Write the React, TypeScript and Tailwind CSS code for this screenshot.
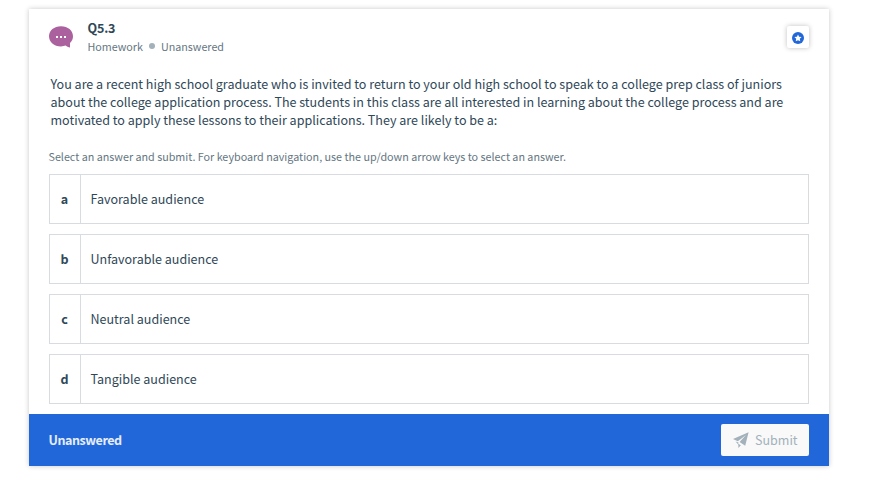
const answers = [
  { key: "a", text: "Favorable audience" },
  { key: "b", text: "Unfavorable audience" },
  { key: "c", text: "Neutral audience" },
  { key: "d", text: "Tangible audience" },
];

function ChatIcon() {
  return (
    <svg width="24" height="22" viewBox="0 0 24 22" aria-hidden="true">
      <path
        d="M12 .2C5.100.2 0 4.500 0 10.200s5.100 10.200 12 10.200c1.700 0 3.300-.3 4.700-.8 1.100.9 2.500 1.700 4.300 1.900V17C22.900 15.200 24 12.900 24 10.200 24 4.500 18.900.2 12 .2z"
        fill="#ab619e"
      />
      <path d="M7 10h2v2H7zM11 10h2v2h-2zM15 10h2v2h-2z" fill="#fff" />
    </svg>
  );
}

function StarBadgeIcon() {
  return (
    <svg width="12" height="12" viewBox="0 0 12 12" aria-hidden="true">
      <circle cx="6" cy="6" r="6" fill="#2167d9" />
      <path d="M6 2.600l1.100 2.200 2.500.3-1.800 1.700.45 2.500L6 8.150 3.750 9.300l.45-2.500-1.800-1.700 2.500-.3z" fill="#fff" />
    </svg>
  );
}

function PlaneIcon() {
  return (
    <svg width="16" height="16" viewBox="0 0 16 16" aria-hidden="true">
      <path d="M15.600.2L0 6.900l4.800 2.300L13 3 6.600 9.900l5.600 3.900zM2.600 9.400l2.900 1.200-.3 1.800zM5.300 11.800l2.500 1.500-2.400 2.600z" fill="#a3b1bb" />
    </svg>
  );
}

export default function App() {
  return (
    <div className="h-[479px] w-[879px] overflow-hidden bg-white pl-[29px] pt-[9px] font-['Noto_Sans_CJK_SC',sans-serif] text-[#2f4858]">
      <main className="flex h-[457px] w-[800px] flex-col bg-white shadow-[0_0_5px_rgba(0,0,0,0.22)]">
        <header className="flex h-[66px] shrink-0 items-start px-5 pt-[10px]">
          <div className="mt-[7px] h-[22px] w-6">
            <ChatIcon />
          </div>
          <div className="ml-[14.500px] flex-1">
            <h1 className="h-[19px] text-[12.540px] font-bold leading-[18px] tracking-[-0.2px]">Q5.3</h1>
            <div className="flex h-[18px] items-center text-[10.740px] leading-[18px] text-[#647682]">
              <span>Homework</span>
              <span className="mx-[6px] mb-[3px] size-[6px] rounded-full bg-[#a3b1bb]" />
              <span>Unanswered</span>
            </div>
          </div>
          <button aria-label="Star" className="mt-[7px] flex size-[22px] items-center justify-center rounded-[2px] bg-white pt-[2px] shadow-[0_0_5px_rgba(0,0,0,0.25)]">
            <StarBadgeIcon />
          </button>
        </header>
        <p className="h-[54px] shrink-0 whitespace-nowrap pl-[21.500px] text-[12.540px] leading-[18px]">
          You are a recent high school graduate who is invited to return to your old high school to speak to a college prep class of juniors
          <br />
          about the college application process. The students in this class are all interested in learning about the college process and are
          <br />
          motivated to apply these lessons to their applications. They are likely to be a:
        </p>
        <p className="mt-[20px] h-[16px] shrink-0 whitespace-nowrap pl-[19.500px] text-[10.750px] leading-[16px] text-[#647682]">
          Select an answer and submit. For keyboard navigation, use the up/down arrow keys to select an answer.
        </p>
        <ul className="mt-[9px] flex flex-col gap-[10px] px-5">
          {answers.map((answer) => (
            <li key={answer.key} className="flex h-[50px] border border-[#d8dbdf] text-[12.540px] leading-[18px]">
              <span className="flex w-[31px] items-center justify-center border-r border-[#d8dbdf] pr-px font-bold">{answer.key}</span>
              <span className="flex items-center pl-[9.500px]">{answer.text}</span>
            </li>
          ))}
        </ul>
        <footer className="mt-[10px] flex h-[52px] shrink-0 items-center justify-between bg-[#2167d9] pl-[19.500px] pr-5">
          <span className="text-[12.540px] font-bold tracking-[-0.45px] text-[#e6eefb]">Unanswered</span>
          <button className="flex h-8 w-[88px] items-center rounded-[2px] bg-[#f9f9f9] pl-[12px] text-[12.540px] text-[#a3b1bb]">
            <PlaneIcon />
            <span className="ml-[6px]">Submit</span>
          </button>
        </footer>
      </main>
    </div>
  );
}
